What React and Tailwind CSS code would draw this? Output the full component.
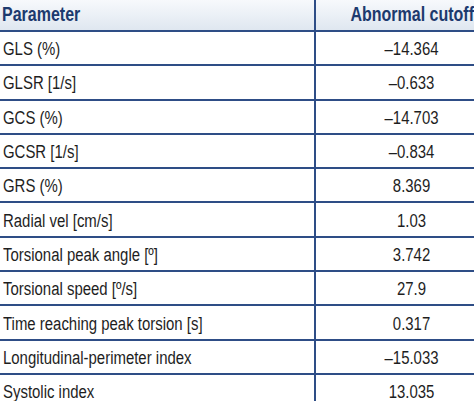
const rows = [
  ['GLS (%)', '–14.364'],
  ['GLSR [1/s]', '–0.633'],
  ['GCS (%)', '–14.703'],
  ['GCSR [1/s]', '–0.834'],
  ['GRS (%)', '8.369'],
  ['Radial vel [cm/s]', '1.03'],
  ['Torsional peak angle [º]', '3.742'],
  ['Torsional speed [º/s]', '27.9'],
  ['Time reaching peak torsion [s]', '0.317'],
  ['Longitudinal-perimeter index', '–15.033'],
  ['Systolic index', '13.035'],
];

// narrow face: Liberation Sans squeezed, close to the condensed type in the table
const font = { fontFamily: '"Liberation Sans", Arial, sans-serif' };

export default function App() {
  return (
    <div className="w-[474px] h-[401px] overflow-hidden bg-white" style={font}>
      <div className="w-[520px]">
        {/* header */}
        <div className="grid grid-cols-[316px_1fr] h-[30px] bg-gradient-to-b from-[#f7f9fc] to-[#dfe7f0] text-[#1c3a6e] font-bold text-[20px] leading-none">
          <div className="flex items-center pl-[2px] pb-[3px] border-r-2 border-[#2e4d86]">
            <span className="inline-block whitespace-nowrap scale-x-[0.8] origin-left">Parameter</span>
          </div>
          <div className="flex items-center justify-center pb-[3px] pr-[12px]">
            <span className="inline-block whitespace-nowrap scale-x-[0.8] origin-center">Abnormal cutoff</span>
          </div>
        </div>

        {rows.map(([name, value]) => (
          <div
            key={name}
            className="grid grid-cols-[316px_1fr] h-[34.3px] border-t-2 border-[#2e4d86] text-[18px] text-[#1e1e1e] leading-none"
          >
            <div className="flex items-center pl-[3px] pt-[2px] border-r-2 border-[#2e4d86]">
              <span className="inline-block whitespace-nowrap scale-x-[0.83] origin-left">{name}</span>
            </div>
            <div className="flex items-center justify-center pt-[2px] pr-[12px]">
              <span className="inline-block whitespace-nowrap scale-x-[0.83] origin-center">{value}</span>
            </div>
          </div>
        ))}
      </div>
    </div>
  );
}
